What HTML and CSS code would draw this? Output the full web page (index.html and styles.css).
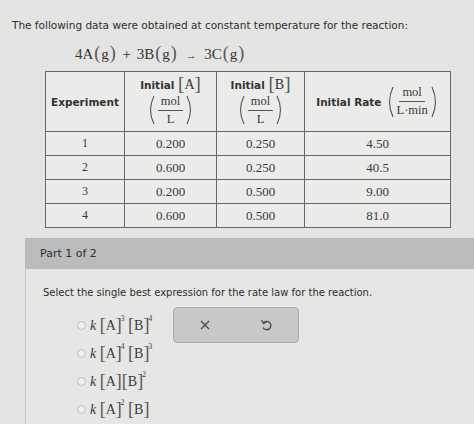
FILE: index.html
```html
<!DOCTYPE html>
<html>
<head>
<meta charset="utf-8">
<link rel="stylesheet" href="styles.css">
</head>
<body>
<div class="page">
  <p class="intro">The following data were obtained at constant temperature for the reaction:</p>
  <div class="eq">4A<span class="p">(</span>g<span class="p">)</span> + 3B<span class="p">(</span>g<span class="p">)</span> <span class="arrow">&#8594;</span> 3C<span class="p">(</span>g<span class="p">)</span></div>
  <table class="data">
    <thead>
      <tr>
        <th class="c1">Experiment</th>
        <th class="c2">
          <div class="hd">Initial <span class="brk">[</span><span class="ser">A</span><span class="brk">]</span></div>
          <div class="unit">
            <svg class="par" width="8" height="30" viewBox="0 0 8 30"><path d="M7 1 Q0 15 7 29" stroke="#555" stroke-width="1.1" fill="none"/></svg>
            <span class="frac"><span class="num">mol</span><span class="den">L</span></span>
            <svg class="par" width="8" height="30" viewBox="0 0 8 30"><path d="M1 1 Q8 15 1 29" stroke="#555" stroke-width="1.1" fill="none"/></svg>
          </div>
        </th>
        <th class="c3">
          <div class="hd">Initial <span class="brk">[</span><span class="ser">B</span><span class="brk">]</span></div>
          <div class="unit">
            <svg class="par" width="8" height="30" viewBox="0 0 8 30"><path d="M7 1 Q0 15 7 29" stroke="#555" stroke-width="1.1" fill="none"/></svg>
            <span class="frac"><span class="num">mol</span><span class="den">L</span></span>
            <svg class="par" width="8" height="30" viewBox="0 0 8 30"><path d="M1 1 Q8 15 1 29" stroke="#555" stroke-width="1.1" fill="none"/></svg>
          </div>
        </th>
        <th class="c4">
          <div class="rate">Initial Rate
            <span class="unit">
              <svg class="par" width="8" height="32" viewBox="0 0 8 32"><path d="M7 1 Q0 16 7 31" stroke="#555" stroke-width="1.1" fill="none"/></svg>
              <span class="frac"><span class="num">mol</span><span class="den">L·min</span></span>
              <svg class="par" width="8" height="32" viewBox="0 0 8 32"><path d="M1 1 Q8 16 1 31" stroke="#555" stroke-width="1.1" fill="none"/></svg>
            </span>
          </div>
        </th>
      </tr>
    </thead>
    <tbody>
      <tr><td class="n">1</td><td>0.200</td><td>0.250</td><td>4.50</td></tr>
      <tr><td class="n">2</td><td>0.600</td><td>0.250</td><td>40.5</td></tr>
      <tr><td class="n">3</td><td>0.200</td><td>0.500</td><td>9.00</td></tr>
      <tr><td class="n">4</td><td>0.600</td><td>0.500</td><td>81.0</td></tr>
    </tbody>
  </table>

  <section class="part">
    <div class="part-head">Part 1 of 2</div>
    <div class="part-body">
      <p class="question">Select the single best expression for the rate law for the reaction.</p>
      <div class="answer">
        <ul class="options">
          <li><span class="radio"></span><span class="expr"><i>k</i> <b>[</b>A<b>]</b><sup>3</sup> <b>[</b>B<b>]</b><sup>4</sup></span></li>
          <li><span class="radio"></span><span class="expr"><i>k</i> <b>[</b>A<b>]</b><sup>4</sup> <b>[</b>B<b>]</b><sup>3</sup></span></li>
          <li><span class="radio"></span><span class="expr"><i>k</i> <b>[</b>A<b>][</b>B<b>]</b><sup>2</sup></span></li>
          <li><span class="radio"></span><span class="expr"><i>k</i> <b>[</b>A<b>]</b><sup>2</sup> <b>[</b>B<b>]</b></span></li>
        </ul>
        <div class="tools">
          <svg class="ico" width="12" height="12" viewBox="0 0 12 12"><path d="M2 2 L10 10 M10 2 L2 10" stroke="#4a4a4a" stroke-width="1.3" fill="none"/></svg>
          <svg class="ico" width="13" height="14" viewBox="0 0 13 14"><path d="M3.2 5.2 A4.2 4.2 0 1 1 3 9.6" stroke="#4a4a4a" stroke-width="1.3" fill="none"/><path d="M1.6 2.2 L3.6 5.6 L6.6 3.6" stroke="#4a4a4a" stroke-width="1.3" fill="none"/></svg>
        </div>
      </div>
    </div>
  </section>
</div>
</body>
</html>
```
FILE: styles.css
```css
html, body {
  margin: 0;
  padding: 0;
}
body {
  background: #e4e4e2;
  font-family: "DejaVu Sans", Verdana, sans-serif;
  color: #2e2e2e;
  width: 474px;
  height: 424px;
  overflow: hidden;
}
.page {
  padding-top: 17px;
}
.intro {
  margin: 0 0 0 12px;
  font-size: 10.5px;
  line-height: 16px;
}
.eq {
  margin: 10px 0 0 75px;
  font-family: "Liberation Serif", "Times New Roman", serif;
  font-size: 15px;
  line-height: 20px;
  color: #333;
  word-spacing: 2px;
}
.eq .p {
  font-size: 18px;
  font-weight: 300;
  color: #555;
  margin: 0 1px;
}
.eq .arrow {
  font-size: 11px;
  margin: 0 2px;
}
.data {
  margin: 6px 0 0 45px;
  width: 406px;
  border-collapse: collapse;
  background: #ebebe9;
  border: 1.5px solid #5e5e5e;
}
.data th, .data td {
  border: 1.3px solid #666;
  text-align: center;
  padding: 0;
}
.data th {
  height: 59px;
  font-size: 10.5px;
  font-weight: bold;
  color: #333;
}
.data td {
  height: 23px;
  font-family: "Liberation Serif", "Times New Roman", serif;
  font-size: 13px;
  color: #3a3a3a;
}
.data td.n {
  font-size: 12px;
}
.c1 { width: 78px; }
.c2 { width: 91px; }
.c3 { width: 87px; }
.hd {
  line-height: 18px;
  margin-top: -2px;
}
.brk {
  font-family: "Liberation Serif", serif;
  font-weight: normal;
  font-size: 19px;
  color: #555;
  vertical-align: -1px;
}
.ser {
  font-family: "Liberation Serif", serif;
  font-weight: normal;
  font-size: 14px;
}
.unit {
  display: inline-flex;
  align-items: center;
  justify-content: center;
  font-family: "Liberation Serif", serif;
  font-weight: normal;
  color: #3a3a3a;
  vertical-align: middle;
}
.par {
  display: block;
}
.frac {
  display: inline-flex;
  flex-direction: column;
  align-items: center;
  font-size: 12.5px;
  line-height: 15px;
  margin: 0 3px;
}
.num {
  padding: 0 3px 1px;
  border-bottom: 1px solid #555;
}
.den {
  padding-top: 1px;
}
.rate {
  display: flex;
  align-items: center;
  justify-content: center;
  gap: 4px;
}
.part {
  margin: 10px 0 0 25px;
}
.part-head {
  background: #b9bbbc;
  height: 31px;
  line-height: 31px;
  padding-left: 15px;
  font-size: 11px;
  color: #2f2f2f;
}
.part-body {
  border-left: 1px solid #c6c6c4;
  background: #e6e6e4;
  padding: 16px 0 0 17px;
  height: 140px;
}
.question {
  margin: 0;
  font-size: 10px;
  line-height: 16px;
}
.answer {
  display: flex;
  align-items: flex-start;
  margin-top: 6px;
}
.options {
  list-style: none;
  margin: 4px 0 0 34px;
  padding: 0;
  width: 96px;
}
.options li {
  display: flex;
  align-items: center;
  height: 28px;
}
.radio {
  width: 7px;
  height: 7px;
  border: 1px solid #bbb;
  border-radius: 50%;
  background: #eee;
  margin-right: 4px;
}
.expr {
  font-family: "Liberation Serif", serif;
  font-size: 14px;
  color: #3a3a3a;
}
.expr b {
  font-weight: 300;
  font-size: 18px;
  color: #555;
  vertical-align: -1px;
}
.expr sup {
  font-size: 7.5px;
  vertical-align: 9px;
  margin-left: -1px;
}
.tools {
  display: flex;
  align-items: center;
  justify-content: space-around;
  width: 124px;
  height: 34px;
  background: #c8c8c8;
  border: 1.5px solid #a9a9a9;
  border-radius: 4px;
  box-shadow: 0 0 0 1px #ececea;
}
.ico {
  display: block;
}
```
